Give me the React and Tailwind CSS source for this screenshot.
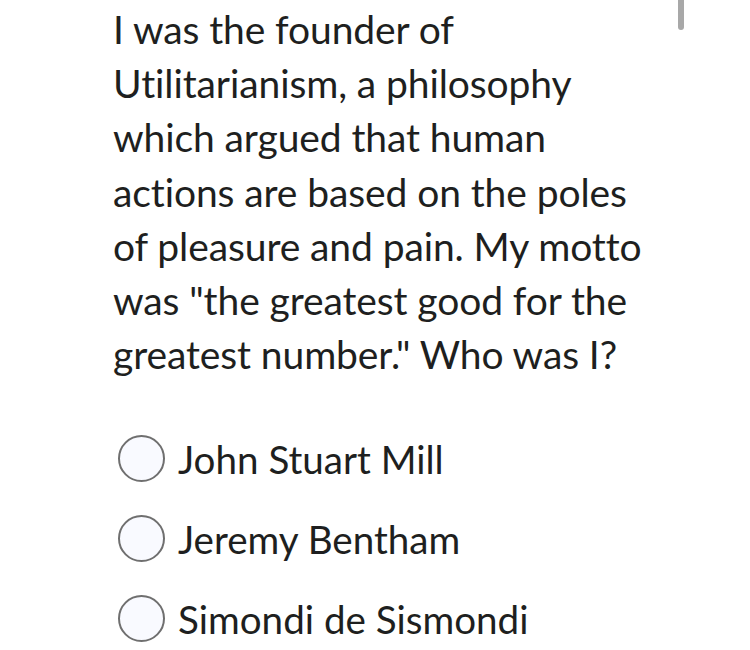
export default function App() {
  const opts = ["John Stuart Mill", "Jeremy Bentham", "Simondi de Sismondi"];
  return (
    <div className="relative w-[750px] h-[650px] bg-white overflow-hidden" style={{ fontFamily: "Lato, 'Open Sans', sans-serif" }}>
      <div className="absolute left-[678px] top-0 w-[6px] h-[30px] bg-[#a8a8a8] rounded-b-[3px]" />
      <div className="pl-[113px] pt-[2px] w-[680px]">
        <p className="text-[39px] leading-[54.2px] text-[#1e1f20] tracking-[-0.1px]">
          I was the founder of<br />
          Utilitarianism, a philosophy<br />
          which argued that human<br />
          actions are based on the poles<br />
          of pleasure and pain. My motto<br />
          was "the greatest good for the<br />
          greatest number." Who was I?
        </p>
        <div className="mt-[54px] flex flex-col gap-[33px] -ml-[95px] pl-[100px]">
          {opts.map((o) => (
            <div key={o} className="flex items-center h-[47px]">
              <div className="w-[47px] h-[47px] rounded-full border-2 border-[#6f6f6f] bg-[#f9faff] shrink-0" />
              <span className="ml-[13px] text-[38.6px] text-[#1e1f20] leading-none">{o}</span>
            </div>
          ))}
        </div>
      </div>
    </div>
  );
}
